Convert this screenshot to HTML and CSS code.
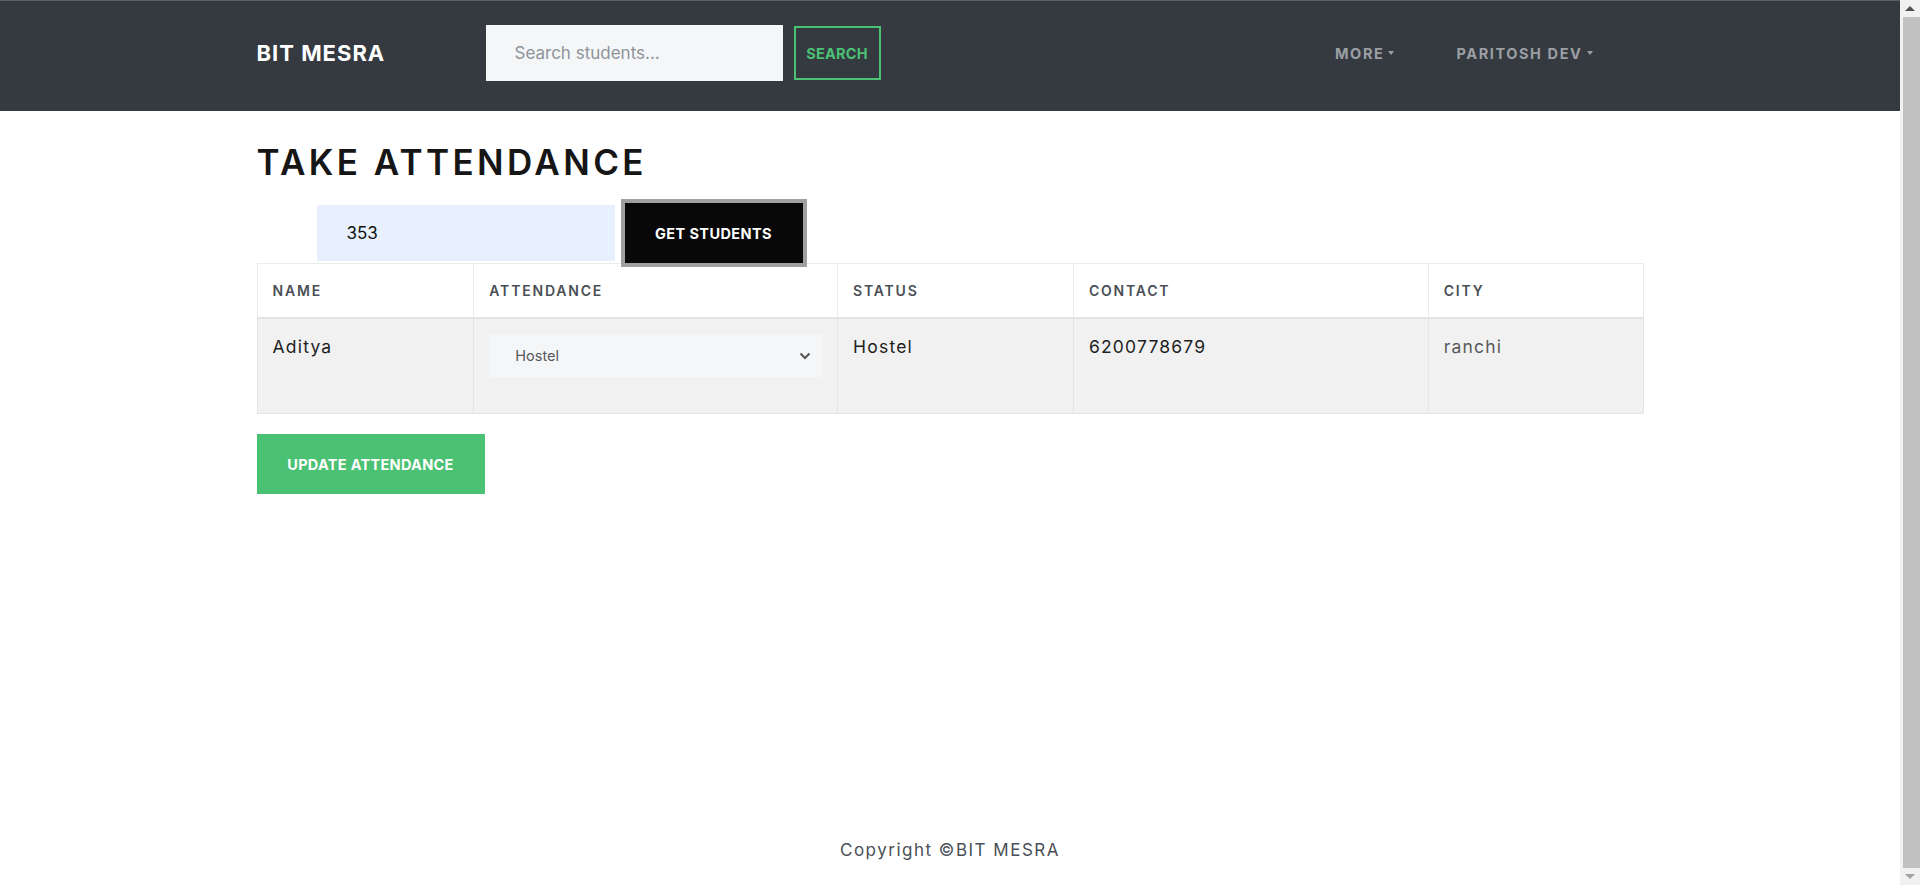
FILE: index.html
```html
<!DOCTYPE html>
<html lang="en">
<head>
<meta charset="utf-8">
<title>Take Attendance - BIT MESRA</title>
<link rel="stylesheet" href="styles.css">
</head>
<body>
<header class="navbar">
  <div class="container nav-inner">
    <a class="brand" href="#">BIT MESRA</a>
    <form class="search-form">
      <input class="search-input" type="text" placeholder="Search students...">
      <button class="search-btn" type="button">SEARCH</button>
    </form>
    <ul class="nav-links">
      <li><a class="nav-link dropdown" href="#">MORE</a></li>
      <li><a class="nav-link dropdown" href="#">PARITOSH DEV</a></li>
    </ul>
  </div>
</header>

<main class="container page">
  <h1 class="page-title">TAKE ATTENDANCE</h1>
  <form class="fetch-row">
    <input class="batch-input" type="text" value="353">
    <button class="get-btn" type="button">GET STUDENTS</button>
  </form>

  <table class="att-table">
    <colgroup>
      <col class="c-name"><col class="c-att"><col class="c-status"><col class="c-contact"><col class="c-city">
    </colgroup>
    <thead>
      <tr>
        <th>Name</th>
        <th>Attendance</th>
        <th>Status</th>
        <th>Contact</th>
        <th>City</th>
      </tr>
    </thead>
    <tbody>
      <tr>
        <td class="t-name">Aditya</td>
        <td>
          <div class="select-box">
            <span>Hostel</span>
            <svg class="chev" width="12" height="8" viewBox="0 0 12 8"><path d="M1.5 1.5 L6 6 L10.5 1.5" fill="none" stroke="#555" stroke-width="2"/></svg>
          </div>
        </td>
        <td class="t-status">Hostel</td>
        <td class="t-contact">6200778679</td>
        <td class="t-city">ranchi</td>
      </tr>
    </tbody>
  </table>

  <button class="update-btn" type="button">UPDATE ATTENDANCE</button>
</main>

<footer class="footer">Copyright ©BIT MESRA</footer>

<div class="fake-scrollbar" aria-hidden="true">
  <span class="sb-arrow sb-up"></span>
  <span class="sb-thumb"></span>
  <span class="sb-arrow sb-down"></span>
</div>
</body>
</html>
```

FILE: styles.css
```css
* { box-sizing: border-box; }

html, body {
  scrollbar-width: none;
}
html::-webkit-scrollbar { display: none; }

body {
  margin: 0;
  padding-right: 20px;
  min-height: 885px;
  display: flex;
  flex-direction: column;
  font-family: Inter, "Liberation Sans", sans-serif;
  color: #212529;
  background: #fff;
}

.container {
  width: 1387px;
  margin: 0 auto;
}

/* NAVBAR */
.navbar {
  background: #353a41;
  border-top: 1px solid #5d6166;
  height: 111px;
}
.nav-inner {
  display: flex;
  align-items: center;
  height: 56px;
  margin-top: 24px;
}
.brand {
  width: 229px;
  color: #fff;
  font-weight: 700;
  font-size: 22px;
  letter-spacing: 1px;
  text-decoration: none;
}
.search-form {
  display: flex;
  align-items: center;
  gap: 11px;
}
.search-input {
  width: 297px;
  height: 56px;
  border: 0;
  background: #f5f6f8;
  padding: 0 0 0 29px;
  font-family: inherit;
  font-size: 17px;
  color: #333;
  outline: none;
}
.search-input::placeholder {
  color: #8d9399;
}
.search-btn {
  width: 87px;
  height: 54px;
  border: 2px solid #4bc174;
  background: transparent;
  color: #4bc174;
  font-family: inherit;
  font-weight: 700;
  font-size: 14.5px;
  letter-spacing: 0.2px;
  padding: 0;
}
.nav-links {
  list-style: none;
  margin: 0 51px 0 auto;
  padding: 0;
  display: flex;
  gap: 62px;
}
.nav-link {
  color: #9b9fa4;
  font-weight: 700;
  font-size: 14.5px;
  letter-spacing: 1.6px;
  text-decoration: none;
  display: inline-flex;
  align-items: center;
}
.dropdown::after {
  content: "";
  margin-left: 4px;
  border-top: 4px solid #9b9fa4;
  border-left: 3.5px solid transparent;
  border-right: 3.5px solid transparent;
  position: relative;
  top: -1px;
}

/* PAGE */
.page {
  flex: 1;
}
.page-title {
  margin: 30px 0 20px;
  font-size: 35px;
  line-height: 42px;
  font-weight: 600;
  letter-spacing: 3.4px;
  color: #161616;
}
.fetch-row {
  display: flex;
  align-items: center;
  height: 60px;
  padding-left: 60px;
  gap: 10px;
}
.batch-input {
  width: 298px;
  height: 56px;
  border: 0;
  background: #e8f0fe;
  padding: 0 0 0 30px;
  font-family: inherit;
  font-size: 17px;
  color: #111;
  outline: none;
}
.get-btn {
  width: 178px;
  height: 60px;
  border: 0;
  background: #080808;
  color: #fff;
  outline: 4px solid #9f9f9f;
  font-family: inherit;
  font-weight: 700;
  font-size: 14.5px;
  letter-spacing: 0.4px;
  position: relative;
  z-index: 1;
}

/* TABLE */
.att-table {
  width: 100%;
  border-collapse: collapse;
  border: 1px solid #ebebeb;
}
.c-name { width: 217px; }
.c-att { width: 364px; }
.c-status { width: 236px; }
.c-contact { width: 355px; }
.c-city { width: 215px; }

.att-table th {
  text-align: left;
  text-transform: uppercase;
  font-size: 14px;
  font-weight: 600;
  letter-spacing: 1.8px;
  color: #4a4f55;
  line-height: 22px;
  padding: 16px 15px 15px;
  border: 1px solid #ebebeb;
  border-bottom: 2px solid #e3e3e3;
}
.att-table td {
  vertical-align: top;
  background: #f1f1f1;
  border: 1px solid #e4e4e4;
  padding: 15px;
  font-size: 17.5px;
  line-height: 26px;
  letter-spacing: 1.2px;
  color: #1e1e1e;
}
.att-table td.t-city {
  color: #58595b;
}
.select-box {
  height: 43px;
  margin-bottom: 21px;
  background: #f5f6f8;
  display: flex;
  align-items: center;
  justify-content: space-between;
  padding: 0 11px 0 26px;
  font-size: 14.5px;
  letter-spacing: 0;
  color: #55585e;
}
.chev {
  display: block;
}

.update-btn {
  margin-top: 20px;
  width: 228px;
  height: 60px;
  border: 0;
  background: #4bc174;
  color: #fff;
  font-family: inherit;
  font-weight: 700;
  font-size: 14.5px;
  letter-spacing: 0.3px;
  padding: 0;
}

/* FOOTER */
.footer {
  text-align: center;
  font-size: 17px;
  line-height: 26px;
  letter-spacing: 1.5px;
  color: #4a4f57;
  padding-bottom: 22px;
}

/* Browser scrollbar (drawn) */
.fake-scrollbar {
  position: fixed;
  top: 0;
  right: 0;
  width: 20px;
  height: 100vh;
  background: #f1f1f1;
  display: flex;
  flex-direction: column;
  align-items: center;
}
.sb-arrow {
  height: 17px;
  width: 100%;
  display: flex;
  justify-content: center;
  align-items: center;
}
.sb-up {
  margin-bottom: 0;
}
.sb-up::before {
  content: "";
  border-bottom: 5px solid #505050;
  border-left: 5px solid transparent;
  border-right: 5px solid transparent;
}
.sb-down::before {
  content: "";
  border-top: 5px solid #a3a3a3;
  border-left: 5px solid transparent;
  border-right: 5px solid transparent;
}
.sb-thumb {
  flex: 1;
  width: 17px;
  margin-left: 2px;
  background: #c1c1c1;
}
```
